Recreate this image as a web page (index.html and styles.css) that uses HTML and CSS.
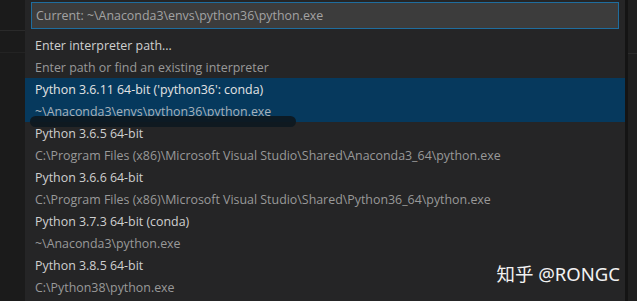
FILE: index.html
```html
<!DOCTYPE html>
<html lang="en">
<head>
  <meta charset="UTF-8">
  <title>Select Interpreter</title>
  <link rel="stylesheet" href="styles.css">
</head>
<body>
  <div class="workbench">
    <div class="side-left"></div>
    <div class="quick-pick">
      <div class="input-wrap">
        <div class="input-box">Current: ~\Anaconda3\envs\python36\python.exe</div>
      </div>
      <ul class="items">
        <li class="item">
          <div class="label">Enter interpreter path...</div>
          <div class="detail">Enter path or find an existing interpreter</div>
        </li>
        <li class="item focused">
          <div class="label">Python 3.6.11 64-bit ('python36': conda)</div>
          <div class="detail">~\Anaconda3\envs\python36\python.exe</div>
          <span class="scribble"></span>
        </li>
        <li class="item">
          <div class="label">Python 3.6.5 64-bit</div>
          <div class="detail">C:\Program Files (x86)\Microsoft Visual Studio\Shared\Anaconda3_64\python.exe</div>
        </li>
        <li class="item">
          <div class="label">Python 3.6.6 64-bit</div>
          <div class="detail">C:\Program Files (x86)\Microsoft Visual Studio\Shared\Python36_64\python.exe</div>
        </li>
        <li class="item">
          <div class="label">Python 3.7.3 64-bit (conda)</div>
          <div class="detail">~\Anaconda3\python.exe</div>
        </li>
        <li class="item">
          <div class="label">Python 3.8.5 64-bit</div>
          <div class="detail">C:\Python38\python.exe</div>
        </li>
      </ul>
      <div class="watermark">知乎 @RONGC</div>
    </div>
    <div class="side-right"></div>
  </div>
</body>
</html>
```

FILE: styles.css
```css
* {
  box-sizing: border-box;
}

body {
  margin: 0;
  background-color: #1e1e1e;
  font-family: "Open Sans", "Noto Sans", sans-serif;
  font-size: 12.4px;
  overflow: hidden;
}

.workbench {
  display: flex;
  height: 301px;
}

.side-left {
  width: 25px;
  background:
    linear-gradient(#2a2a2a, #2a2a2a) 0 30px / 100% 1px no-repeat,
    linear-gradient(#232323, #232323) 0 52px / 100% 1px no-repeat,
    #1b1b1b;
}

.side-right {
  width: 12px;
  border-left: 3px solid #141414;
  background:
    linear-gradient(#2c2c2c, #2c2c2c) 0 53px / 100% 1px no-repeat,
    #1f1f1f;
}

.quick-pick {
  flex: 1;
  position: relative;
  background-color: #252526;
}

.input-wrap {
  height: 34px;
  padding: 2px 6px 5px 6px;
}

.input-box {
  height: 27px;
  background-color: #3c3c3c;
  border: 1px solid #1f6d9e;
  color: #a3a3a3;
  padding: 0 0 0 4px;
  line-height: 26px;
  white-space: nowrap;
}

.items {
  list-style: none;
  margin: 0;
  padding: 0;
}

.item {
  position: relative;
  height: 44px;
  padding: 1px 0 0 10px;
  line-height: 22px;
  white-space: nowrap;
}

.label {
  color: #d0d0d0;
}

.detail {
  color: #999999;
}

.focused {
  background-color: #06395d;
}

.focused .label {
  color: #e4e4e4;
}

.focused .detail {
  color: #a9b1b8;
}

.scribble {
  position: absolute;
  left: 5px;
  top: 38px;
  width: 266px;
  height: 11px;
  border-radius: 6px;
  background-color: #0d1820;
  opacity: 0.92;
}

.watermark {
  position: absolute;
  right: 5px;
  bottom: 15px;
  color: #f2f2f2;
  font-family: "Noto Sans", "Noto Sans CJK SC", sans-serif;
  font-size: 18.5px;
  letter-spacing: 0;
}
```
